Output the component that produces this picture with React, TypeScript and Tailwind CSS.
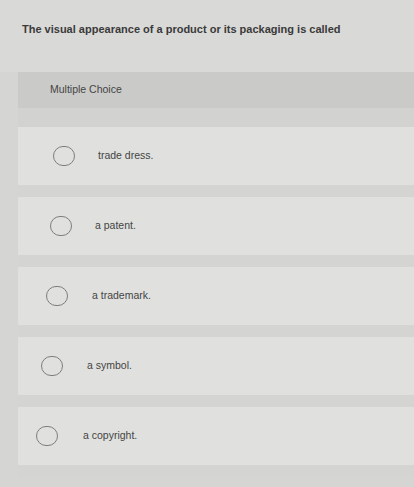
const options = [
  { label: "trade dress.", circle: 53, text: 98 },
  { label: "a patent.", circle: 50, text: 95 },
  { label: "a trademark.", circle: 46, text: 92 },
  { label: "a symbol.", circle: 41, text: 87 },
  { label: "a copyright.", circle: 36, text: 83 },
];

export default function App() {
  return (
    <div
      className="w-[414px] h-[487px] overflow-hidden bg-[#d5d5d3] text-[#3d3d3d]"
      style={{ fontFamily: '"Liberation Sans", Arial, sans-serif' }}
    >
      <div className="h-[72px] pl-[22px] pt-[21px] bg-[#d9d9d7]">
        <p className="text-[11px] font-semibold text-[#3a3a3a]">
          The visual appearance of a product or its packaging is called
        </p>
      </div>
      <div className="ml-[18px] bg-[#cacac8]">
        <div className="h-[36px] flex items-center pl-[32px] text-[10.5px] font-medium text-[#454545]">
          Multiple Choice
        </div>
        <div className="h-[19px] bg-[#d2d2d0]" />
        {options.map((o) => (
          <div key={o.label} className="flex flex-col">
            <div className="h-[58px] flex items-center bg-[#e0e1de]">
              <div
                className="w-[22px] h-[20px] rounded-full border-[1.5px] border-[#7d7d80] shrink-0"
                style={{ marginLeft: o.circle - 18 }}
              />
              <span
                className="text-[10.5px] font-medium text-[#444]"
                style={{ marginLeft: o.text - o.circle - 22 }}
              >
                {o.label}
              </span>
            </div>
            <div className="h-[12px] bg-[#d4d4d2]" />
          </div>
        ))}
      </div>
    </div>
  );
}
